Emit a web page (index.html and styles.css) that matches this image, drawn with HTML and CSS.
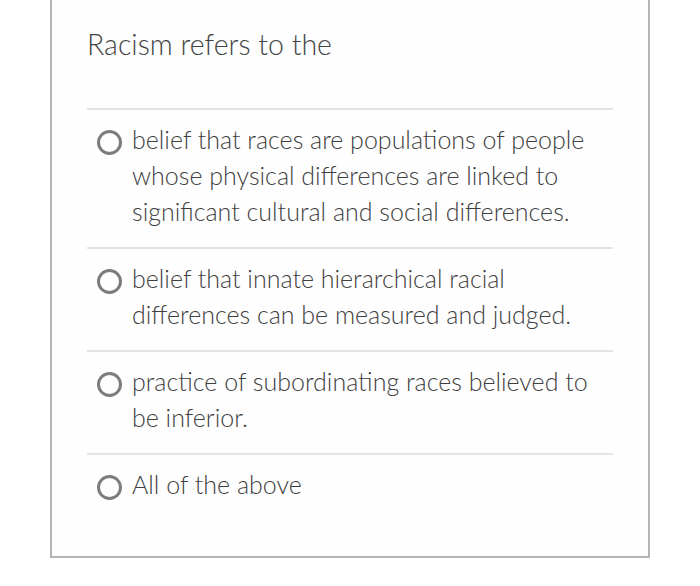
FILE: index.html
```html
<!DOCTYPE html>
<html>
<head>
<meta charset="utf-8">
<link rel="stylesheet" href="styles.css">
</head>
<body>
<div class="card">
  <div class="question">Racism refers to the</div>
  <div class="options">
    <div class="option">
      <span class="radio"></span>
      <span class="label">belief that races are populations of people whose physical differences are linked to significant cultural and social differences.</span>
    </div>
    <div class="option">
      <span class="radio"></span>
      <span class="label">belief that innate hierarchical racial differences can be measured and judged.</span>
    </div>
    <div class="option">
      <span class="radio"></span>
      <span class="label">practice of subordinating races believed to be inferior.</span>
    </div>
    <div class="option last">
      <span class="radio"></span>
      <span class="label">All of the above</span>
    </div>
  </div>
</div>
</body>
</html>
```
FILE: styles.css
```css
html, body {
  margin: 0;
  padding: 0;
  background: #ffffff;
}
body {
  font-family: Lato, "Open Sans", sans-serif;
  font-weight: 300;
  color: #3f3f3f;
}
.card {
  margin-left: 50px;
  width: 600px;
  height: 558px;
  box-sizing: border-box;
  border: 2px solid #b4b4b4;
  border-top: none;
  padding: 0 35px;
  background: #fefefe;
}
.question {
  font-size: 28.5px;
  line-height: 36px;
  padding-top: 26px;
  padding-bottom: 46px;
  border-bottom: 2px solid #e4e4e4;
  color: #444;
}
.option {
  display: flex;
  align-items: flex-start;
  gap: 10px;
  padding: 11px 0 18px 10px;
  border-bottom: 2px solid #e4e4e4;
  font-size: 25px;
  line-height: 36px;
}
.option.last {
  border-bottom: none;
}
.radio {
  flex: none;
  width: 19px;
  height: 19px;
  border: 3px solid #7c7c7c;
  border-radius: 50%;
  margin-top: 9px;
}
.label {
  flex: 1;
}
```
